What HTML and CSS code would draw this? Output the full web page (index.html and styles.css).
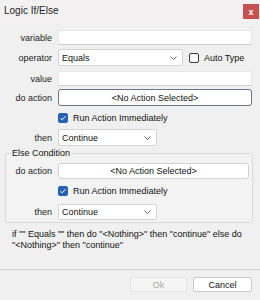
FILE: index.html
```html
<!DOCTYPE html>
<html>
<head>
<meta charset="utf-8">
<link rel="stylesheet" href="styles.css">
</head>
<body>
<div class="dialog">
  <div class="titlebar">
    <span class="title">Logic If/Else</span>
    <span class="close">x</span>
  </div>
  <div class="form">
    <div class="row r-var">
      <span class="lbl">variable</span>
      <div class="input"></div>
    </div>
    <div class="row r-op">
      <span class="lbl">operator</span>
      <div class="select op">Equals<svg class="chev" width="7" height="4" viewBox="0 0 7 4"><polyline points="0.5,0.5 3.5,3.5 6.5,0.5" fill="none" stroke="#666" stroke-width="1"/></svg></div>
      <span class="cb"></span>
      <span class="cbtext">Auto Type</span>
    </div>
    <div class="row r-val">
      <span class="lbl">value</span>
      <div class="input"></div>
    </div>
    <div class="row r-act">
      <span class="lbl">do action</span>
      <div class="btn action main">&lt;No Action Selected&gt;</div>
    </div>
    <div class="row r-chk">
      <span class="cb checked"><svg width="8" height="8" viewBox="0 0 8 8"><polyline points="1.5,4.2 3.2,5.8 6.5,2.2" fill="none" stroke="#fff" stroke-width="1"/></svg></span>
      <span class="cbtext">Run Action Immediately</span>
    </div>
    <div class="row r-then">
      <span class="lbl">then</span>
      <div class="select then">Continue<svg class="chev" width="7" height="4" viewBox="0 0 7 4"><polyline points="0.5,0.5 3.5,3.5 6.5,0.5" fill="none" stroke="#666" stroke-width="1"/></svg></div>
    </div>
  </div>
  <fieldset class="group">
    <legend>Else Condition</legend>
    <div class="row g-act">
      <span class="lbl g">do action</span>
      <div class="btn action sub">&lt;No Action Selected&gt;</div>
    </div>
    <div class="row g-chk">
      <span class="cb checked"><svg width="8" height="8" viewBox="0 0 8 8"><polyline points="1.5,4.2 3.2,5.8 6.5,2.2" fill="none" stroke="#fff" stroke-width="1"/></svg></span>
      <span class="cbtext">Run Action Immediately</span>
    </div>
    <div class="row g-then">
      <span class="lbl g">then</span>
      <div class="select then">Continue<svg class="chev" width="7" height="4" viewBox="0 0 7 4"><polyline points="0.5,0.5 3.5,3.5 6.5,0.5" fill="none" stroke="#666" stroke-width="1"/></svg></div>
    </div>
  </fieldset>
  <div class="summary">if "" Equals "" then do "&lt;Nothing&gt;" then "continue" else do <span class="nw">"&lt;Nothing&gt;"</span> then "continue"</div>
  <div class="footer">
    <div class="fbtn ok">Ok</div>
    <div class="fbtn cancel">Cancel</div>
  </div>
</div>
</body>
</html>
```
FILE: styles.css
```css
* { box-sizing: border-box; }
body {
  margin: 0;
  font-family: "Liberation Sans", Arial, sans-serif;
  font-size: 9px;
  color: #1b1b1b;
  background: #f0f0f0;
}
.dialog {
  width: 260px;
  height: 300px;
  background: #f0f0f0;
  display: flex;
  flex-direction: column;
}
.titlebar {
  height: 22px;
  flex: none;
  background: #f3f1f2;
  display: flex;
  justify-content: space-between;
  align-items: flex-start;
  padding-left: 4px;
}
.title {
  font-size: 10px;
  line-height: 22px;
  color: #222;
}
.close {
  margin-top: 4px;
  margin-right: 1px;
  width: 16px;
  height: 15px;
  background: #c75050;
  color: #fff;
  font-size: 9px;
  font-weight: bold;
  display: flex;
  align-items: center;
  justify-content: center;
}
.form {
  display: flex;
  flex-direction: column;
  padding-right: 8px;
}
.row {
  display: flex;
  align-items: center;
}
.lbl {
  width: 52px;
  flex: none;
  text-align: right;
  margin-right: 6px;
}
.lbl.g { width: 46px; }
.r-var { margin-top: 8px; height: 15px; }
.r-op { margin-top: 4px; height: 17px; }
.r-val { margin-top: 5px; height: 15px; }
.r-act { margin-top: 3px; height: 17px; }
.r-chk { margin-top: 6px; height: 12px; padding-left: 58px; }
.r-then { margin-top: 5px; height: 17px; }
.input {
  flex: 1;
  height: 100%;
  background: #fff;
  border: 1px solid #e6e6e6;
  border-bottom-color: #cfcfcf;
}
.select {
  height: 100%;
  background: #fff;
  border: 1px solid #d4d4d4;
  border-radius: 2px;
  display: flex;
  align-items: center;
  justify-content: space-between;
  padding: 0 5px 0 3px;
  color: #111;
}
.select.op { width: 125px; }
.select.then { width: 99px; }
.cb {
  width: 10px;
  height: 10px;
  flex: none;
  border: 1px solid #3a3a3a;
  border-radius: 2px;
  background: #fff;
  display: flex;
  align-items: center;
  justify-content: center;
}
.r-op .cb { margin-left: 6px; }
.cb.checked {
  background: #2763b5;
  border-color: #2763b5;
}
.cbtext { margin-left: 5px; color: #111; }
.btn {
  flex: 1;
  height: 100%;
  background: #fff;
  border-radius: 3px;
  display: flex;
  align-items: center;
  justify-content: center;
  color: #111;
}
.btn.main { border: 1px solid #66758a; }
.btn.sub { border: 1px solid #d2d2d2; }
.group {
  margin: 1px 7px 0 5px;
  padding: 4px 3px 2px 0;
  border: 1px solid #dadada;
  border-radius: 3px;
  background: #f3f3f3;
  min-width: 0;
}
.group legend {
  margin-left: 5px;
  padding: 0 1px;
  line-height: 12px;
  color: #111;
}
.g-act { height: 16px; }
.g-chk { margin-top: 6px; height: 12px; padding-left: 52px; }
.g-then { margin-top: 7px; height: 16px; }
.summary {
  height: 46px;
  flex: none;
  padding: 6px 8px 0 12px;
  line-height: 11px;
  color: #111;
}
.nw { white-space: nowrap; }
.footer {
  border-top: 1px solid #d2d2d2;
  flex: 1;
  display: flex;
  justify-content: flex-end;
  align-items: flex-start;
  gap: 6px;
  padding: 7px 8px 0 0;
}
.fbtn {
  height: 15px;
  display: flex;
  align-items: center;
  justify-content: center;
  border-radius: 2px;
}
.ok {
  width: 57px;
  background: #f5f5f5;
  border: 1px solid #e3e3e3;
  color: #a8a8a8;
}
.cancel {
  width: 59px;
  background: #fff;
  border: 1px solid #c9c9c9;
  color: #111;
}
```
